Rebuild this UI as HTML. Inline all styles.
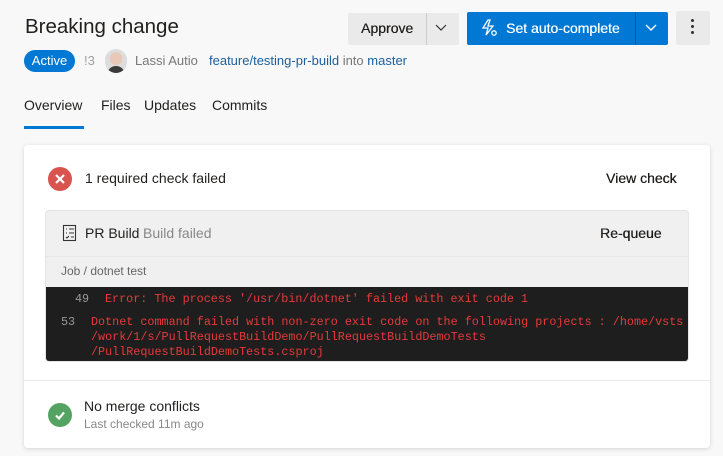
<!DOCTYPE html>
<html><head><style>
*{box-sizing:border-box;margin:0;padding:0}
body{width:723px;height:456px;overflow:hidden;background:#f8f8f8;font-family:"Segoe UI","Liberation Sans",sans-serif;color:#201f1e;position:relative}
.a{position:absolute;white-space:nowrap}
.btn{position:absolute;border-radius:2px}
.sb{font-size:14px;font-weight:normal;text-shadow:0.3px 0 0 currentColor}
.mono{font-family:"Liberation Mono",monospace;font-size:11.75px;color:#e63a3a}
</style></head><body>
<div class="a" style="left:25px;top:15px;font-size:20.5px">Breaking change</div>
<div class="a" style="left:24px;top:50px;width:51px;height:22px;background:#0078d4;border-radius:11px;color:#fff;font-size:13px;text-align:center;line-height:22px">Active</div>
<div class="a" style="left:84px;top:53px;font-size:13px;color:#a0a0a0">!3</div>
<div class="a" style="left:105px;top:49px;width:22px;height:24px;border-radius:11px;background:radial-gradient(circle at 50% 40%,#e8c9b8 0 35%,#ddd 36%);overflow:hidden"><div style="position:absolute;left:2px;top:17px;width:18px;height:10px;background:#3a3a3a;border-radius:9px 9px 0 0"></div></div>
<div class="a" style="left:135px;top:53px;font-size:13px;color:#777">Lassi Autio</div>
<div class="a" style="left:209px;top:53px;font-size:13px;color:#1b5f9c">feature/testing-pr-build <span style="color:#777">into</span> master</div>
<div class="a" style="left:24px;top:97px;font-size:14px">Overview</div>
<div class="a" style="left:24px;top:126px;width:60px;height:3px;background:#0078d4"></div>
<div class="a" style="left:101px;top:97px;font-size:14px">Files</div>
<div class="a" style="left:144px;top:97px;font-size:14px">Updates</div>
<div class="a" style="left:212px;top:97px;font-size:14px">Commits</div>

<div class="btn" style="left:348px;top:13px;width:111px;height:32px;background:#eaeaea"></div>
<div class="a sb" style="left:361px;top:20px">Approve</div>
<div class="a" style="left:426px;top:13px;width:1px;height:32px;background:#ccc"></div>
<svg class="a" style="left:434px;top:23px" width="14" height="10"><path d="M2 2l5 5 5-5" fill="none" stroke="#333" stroke-width="1.2"/></svg>
<div class="btn" style="left:467px;top:12px;width:201px;height:33px;background:#0078d4"></div>
<svg class="a" style="left:480px;top:19px" width="18" height="18"><path d="M8 1L3 9h5l-2 7 7-9H8l2-6z" fill="none" stroke="#fff" stroke-width="1.3"/><circle cx="14" cy="14" r="2.2" fill="none" stroke="#fff" stroke-width="1.3"/></svg>
<div class="a sb" style="left:506px;top:20px;color:#fff">Set auto-complete</div>
<div class="a" style="left:635px;top:12px;width:1px;height:33px;background:#005a9e"></div>
<svg class="a" style="left:644px;top:23px" width="14" height="10"><path d="M2 2l5 5 5-5" fill="none" stroke="#fff" stroke-width="1.4"/></svg>
<div class="btn" style="left:676px;top:11px;width:34px;height:34px;background:#eaeaea"></div>
<div class="a" style="left:691px;top:19px;width:3px;height:3px;background:#333;border-radius:2px;box-shadow:0 6px 0 #333,0 12px 0 #333"></div>

<div class="a" style="left:24px;top:145px;width:686px;height:303px;background:#fff;border-radius:4px;box-shadow:0 1px 4px rgba(0,0,0,.15)"></div>
<div class="a" style="left:48px;top:167px;width:24px;height:24px;border-radius:12px;background:#d9534f"></div>
<svg class="a" style="left:48px;top:167px" width="24" height="24"><path d="M8 8l8 8M16 8l-8 8" stroke="#fff" stroke-width="2.2"/></svg>
<div class="a" style="left:85px;top:170px;font-size:14px">1 required check failed</div>
<div class="a sb" style="left:606px;top:170px">View check</div>

<div class="a" style="left:45px;top:210px;width:644px;height:152px;background:#f0f0f0;border:1px solid #e4e4e4;border-radius:4px;overflow:hidden">
 <div style="position:absolute;left:0;top:45px;width:100%;height:1px;background:#e6e6e6"></div>
 <div style="position:absolute;left:0;top:76px;width:100%;height:76px;background:#1e1e1e"></div>
</div>
<svg class="a" style="left:62px;top:224px" width="16" height="18"><rect x="1.5" y="1.5" width="12" height="15" fill="none" stroke="#333" stroke-width="1.1"/><path d="M4 5h1M7 5h5M4 9h1M7 9h5M4 13l1 1 2-2M9 13h3" stroke="#333" stroke-width="1.1" fill="none"/></svg>
<div class="a" style="left:85px;top:225px;font-size:14px">PR Build</div>
<div class="a" style="left:143px;top:225px;font-size:14px;color:#888">Build failed</div>
<div class="a sb" style="left:600px;top:225px">Re-queue</div>
<div class="a" style="left:61px;top:264px;font-size:12px;color:#666">Job / dotnet test</div>
<div class="a mono" style="left:75px;top:292px;color:#999">49</div>
<div class="a mono" style="left:105px;top:292px">Error: The process '/usr/bin/dotnet' failed with exit code 1</div>
<div class="a mono" style="left:61px;top:315px;color:#999">53</div>
<div class="a mono" style="left:91px;top:315px;line-height:15px">Dotnet command failed with non-zero exit code on the following projects : /home/vsts<br>/work/1/s/PullRequestBuildDemo/PullRequestBuildDemoTests<br>/PullRequestBuildDemoTests.csproj</div>

<div class="a" style="left:24px;top:380px;width:686px;height:1px;background:#eaeaea"></div>
<div class="a" style="left:48px;top:403px;width:24px;height:24px;border-radius:12px;background:#55a362"></div>
<svg class="a" style="left:48px;top:403px" width="24" height="24"><path d="M8 12.5l3 3 5-6" fill="none" stroke="#fff" stroke-width="2.2"/></svg>
<div class="a" style="left:84px;top:398px;font-size:14px">No merge conflicts</div>
<div class="a" style="left:84px;top:417px;font-size:12px;color:#888">Last checked 11m ago</div>
</body></html>
